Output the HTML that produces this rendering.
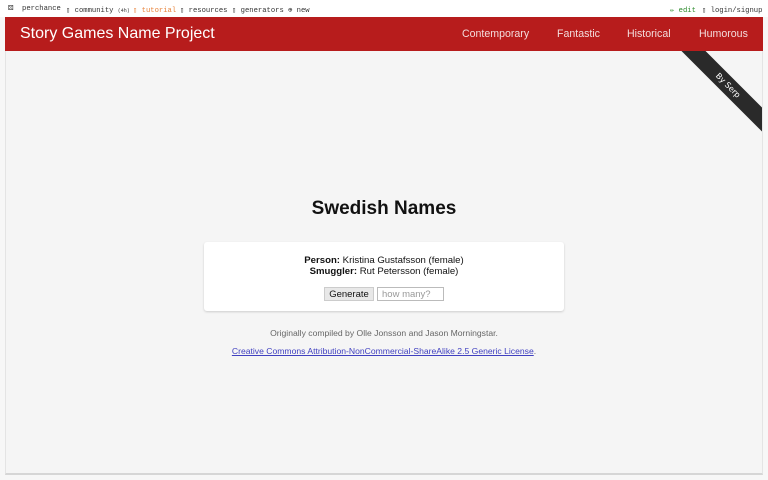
<!DOCTYPE html>
<html><head><meta charset="utf-8"><style>
*{margin:0;padding:0;box-sizing:border-box}
body{width:768px;height:480px;background:#f7f7f7;font-family:"Liberation Sans",sans-serif;position:relative;overflow:hidden}
.top{position:absolute;top:0;left:0;right:0;height:17px;background:#fff;font-family:"Liberation Mono",monospace;font-size:7.2px;color:#333}
.top span{position:absolute;top:5px;white-space:nowrap}
.hdr{position:absolute;left:5px;top:17px;width:758px;height:34px;background:#b71c1c;color:#fff}
.hdr .t{position:absolute;left:15px;top:8px;font-size:16px;font-family:"Liberation Sans",sans-serif}
.hdr .n{position:absolute;top:11px;font-size:10.6px;font-family:"Liberation Sans",sans-serif;color:#f3dcdc}
.main{position:absolute;left:5px;top:51px;width:758px;height:424px;background:#f5f5f5;border:1px solid #e4e4e4;border-top:none;border-bottom:2px solid #d6d6d6;overflow:hidden}
.rib{position:absolute;left:622px;top:26px;width:200px;height:17px;background:#2a2a2a;color:#fff;font-size:8px;text-align:center;line-height:17px;transform:rotate(45deg);font-family:"DejaVu Sans",sans-serif}
h1{position:absolute;top:198px;left:0;width:768px;text-align:center;font-size:19px;font-weight:bold;color:#111}
.card{position:absolute;left:204px;top:242px;width:360px;height:69px;background:#fff;border-radius:3px;box-shadow:0 1px 2px #ccc;text-align:center;font-size:9.6px;color:#111}
.card .l{line-height:11px}
.btn{position:absolute;left:120px;top:45px;width:50px;height:14px;background:#e8e8e8;border:1px solid #ccc;font-size:9.5px;line-height:13px}
.inp{position:absolute;left:173px;top:45px;width:67px;height:14px;border:1px solid #bbb;font-size:9.5px;color:#999;line-height:13px;text-align:left;padding-left:4px}
.f{position:absolute;left:0;width:768px;text-align:center;font-size:8.6px;color:#666}
</style></head><body>
<div class="top">
<span style="left:8px;font-size:9px;top:3px">⚄</span>
<span style="left:22px">perchance</span>
<span style="left:66px">▯ community <small style="font-size:5px">(4h)</small></span>
<span style="left:133px;color:#e8833a">▯ tutorial</span>
<span style="left:180px">▯ resources</span>
<span style="left:232px">▯ generators</span>
<span style="left:288px">⊕ new</span>
<span style="left:670px;color:#2a8a2a">✏ edit</span>
<span style="left:702px">▯ login/signup</span>
</div>
<div class="hdr"><div class="t">Story Games Name Project</div>
<div class="n" style="left:457px">Contemporary</div>
<div class="n" style="left:552px">Fantastic</div>
<div class="n" style="left:622px">Historical</div>
<div class="n" style="left:694px">Humorous</div></div>
<div class="main"><div class="rib">By Serp</div></div>
<h1>Swedish Names</h1>
<div class="card">
<div class="l" style="padding-top:13px"><b>Person:</b> Kristina Gustafsson (female)</div>
<div class="l"><b>Smuggler:</b> Rut Petersson (female)</div>
<div class="btn">Generate</div><div class="inp">how many?</div>
</div>
<div class="f" style="top:328px">Originally compiled by Olle Jonsson and Jason Morningstar.</div>
<div class="f" style="top:346px"><u style="color:#4040c0">Creative Commons Attribution-NonCommercial-ShareAlike 2.5 Generic License</u>.</div>
</body></html>
